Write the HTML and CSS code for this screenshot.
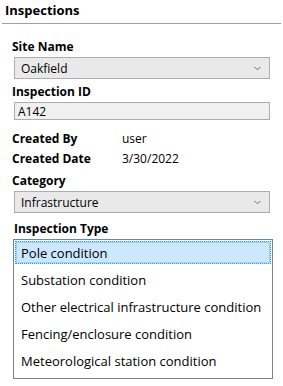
FILE: index.html
```html
<!doctype html>
<html lang="en">
<head>
  <meta charset="utf-8">
  <title>Inspections</title>
  <link rel="stylesheet" href="styles.css">
</head>
<body>
  <div class="header">Inspections</div>

  <div class="form">
    <div class="label">Site Name</div>
    <div class="combo">
      <span>Oakfield</span>
      <svg class="chev" width="7" height="5" viewBox="0 0 7 5"><path d="M0.5 0.8 L3.5 3.8 L6.5 0.8" fill="none" stroke="#6a6a6a" stroke-width="1"/></svg>
    </div>

    <div class="label">Inspection ID</div>
    <div class="textbox">A142</div>

    <div class="row"><span class="label key">Created By</span><span>user</span></div>
    <div class="row"><span class="label key">Created Date</span><span>3/30/2022</span></div>

    <div class="label cat-label">Category</div>
    <div class="combo">
      <span>Infrastructure</span>
      <svg class="chev" width="7" height="5" viewBox="0 0 7 5"><path d="M0.5 0.8 L3.5 3.8 L6.5 0.8" fill="none" stroke="#6a6a6a" stroke-width="1"/></svg>
    </div>

    <div class="label type-label">Inspection Type</div>
    <div class="listbox">
      <div class="item selected">Pole condition</div>
      <div class="item">Substation condition</div>
      <div class="item">Other electrical infrastructure condition</div>
      <div class="item">Fencing/enclosure condition</div>
      <div class="item">Meteorological station condition</div>
    </div>
  </div>
</body>
</html>
```
FILE: styles.css
```css
body {
  margin: 0;
  background: #ffffff;
  font-family: "Open Sans", "Noto Sans", sans-serif;
  font-size: 12px;
  color: #000000;
}

.header {
  font-weight: bold;
  font-size: 13px;
  padding: 1px 3px 4px 3px;
  border-bottom: 1px solid #a0a0a0;
  margin: 0 2px 0 2px;
}

.form {
  padding: 14px 0 0 12px;
}

.label {
  font-weight: bold;
  font-size: 12px;
}

.combo {
  margin: 2px 13px 4px 2px;
  height: 20px;
  border: 1px solid #adadad;
  background: #e9e9e9;
  display: flex;
  align-items: center;
  justify-content: space-between;
  padding: 0 8px 0 6px;
}

.textbox {
  margin: 2px 13px 8px 2px;
  height: 16px;
  border: 1px solid #adadad;
  background: #f0f0f0;
  padding: 0 0 0 3px;
  display: flex;
  align-items: center;
}

.row {
  display: flex;
  height: 20px;
  align-items: center;
}

.key {
  width: 110px;
}

.cat-label {
  margin-top: 4px;
}

.type-label {
  margin: 7px 0 2px 2px;
}

.listbox {
  margin: 0 10px 0 1px;
  height: 136px;
  border: 1px solid #828282;
  padding: 1px;
}

.item {
  height: 21px;
  margin-bottom: 4px;
  padding-left: 5px;
  display: flex;
  align-items: center;
  font-size: 13px;
  border: 1px solid transparent;
}

.selected {
  background: #cce8ff;
  border: 1px dotted #26a0da;
  outline: 1px solid #99d1ff;
  outline-offset: -2px;
}
```
